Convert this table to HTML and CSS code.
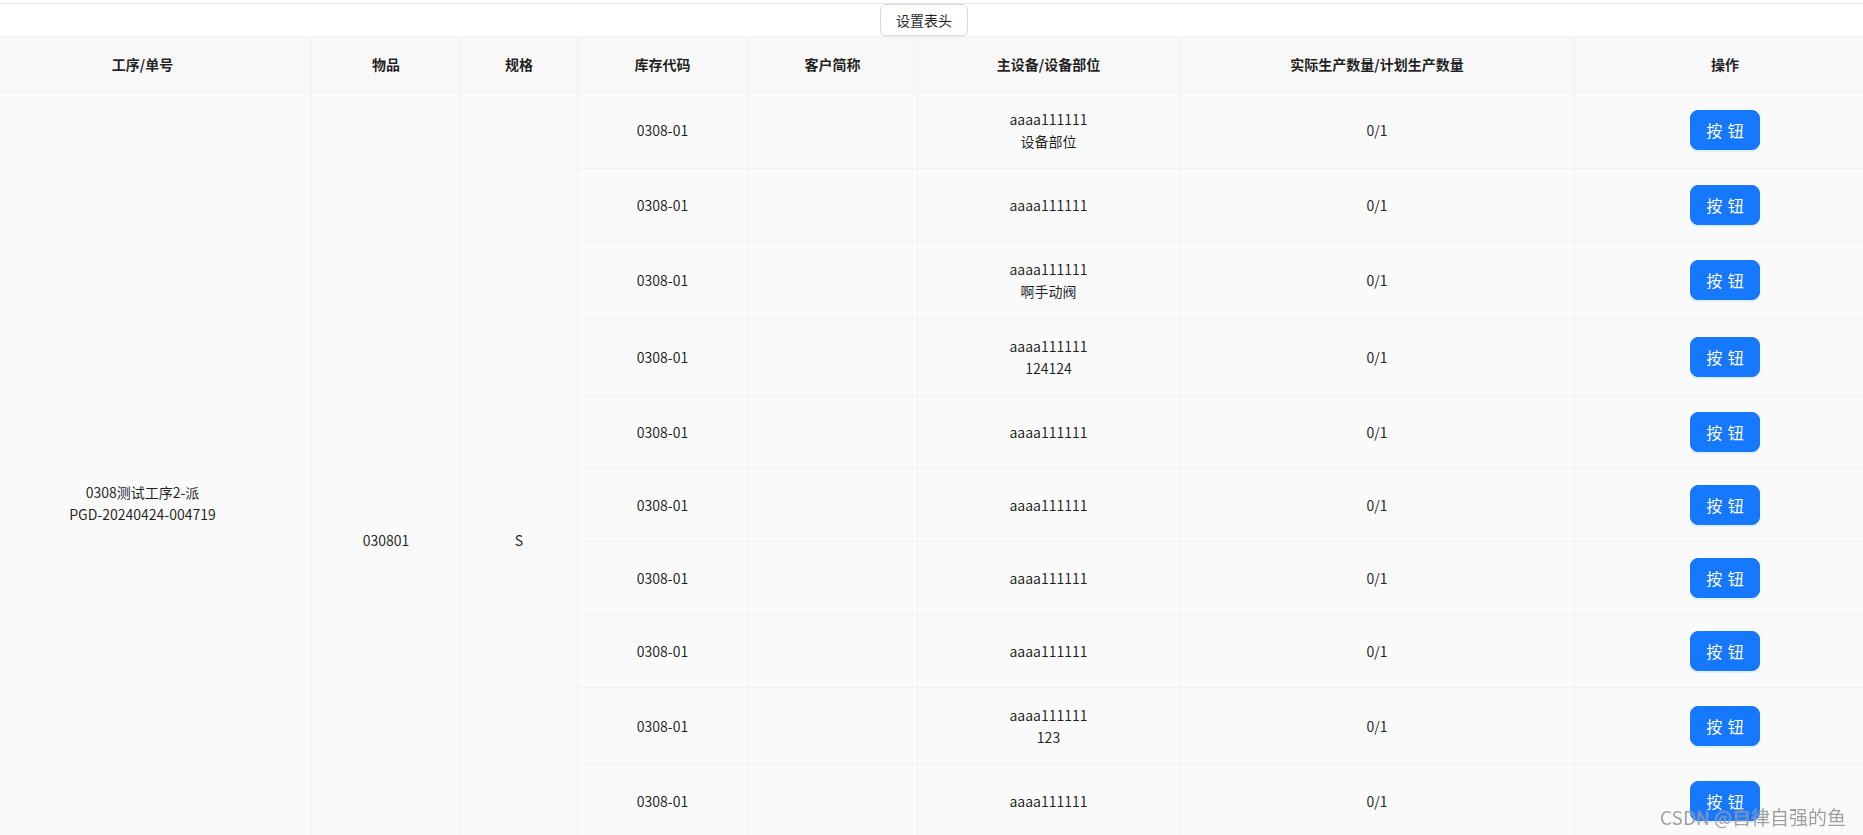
FILE: index.html
```html
<!DOCTYPE html>
<html lang="zh-CN">
<head>
<meta charset="utf-8">
<title>表格</title>
<link rel="stylesheet" href="styles.css">
</head>
<body>
<div class="page">
  <div class="toolbar">
    <button class="btn btn-default" type="button">设置表头</button>
  </div>
  <table class="grid">
    <colgroup>
      <col class="c-proc"><col class="c-item"><col class="c-spec"><col class="c-code"><col class="c-cust"><col class="c-dev"><col class="c-qty"><col class="c-op">
    </colgroup>
    <thead>
      <tr>
        <th>工序/单号</th>
        <th>物品</th>
        <th>规格</th>
        <th>库存代码</th>
        <th>客户简称</th>
        <th>主设备/设备部位</th>
        <th>实际生产数量/计划生产数量</th>
        <th>操作</th>
      </tr>
    </thead>
    <tbody>
      <tr>
        <td rowspan="11"><div>0308测试工序2-派</div><div>PGD-20240424-004719</div></td>
        <td rowspan="12">030801</td>
        <td rowspan="12">S</td>
        <td>0308-01</td><td></td>
        <td><div>aaaa111111</div><div>设备部位</div></td>
        <td>0/1</td>
        <td><button class="btn btn-primary" type="button"><span class="two">按钮</span></button></td>
      </tr>
      <tr>
        <td>0308-01</td><td></td>
        <td><div>aaaa111111</div></td>
        <td>0/1</td>
        <td><button class="btn btn-primary" type="button"><span class="two">按钮</span></button></td>
      </tr>
      <tr>
        <td>0308-01</td><td></td>
        <td><div>aaaa111111</div><div>啊手动阀</div></td>
        <td>0/1</td>
        <td><button class="btn btn-primary" type="button"><span class="two">按钮</span></button></td>
      </tr>
      <tr>
        <td>0308-01</td><td></td>
        <td><div>aaaa111111</div><div>124124</div></td>
        <td>0/1</td>
        <td><button class="btn btn-primary" type="button"><span class="two">按钮</span></button></td>
      </tr>
      <tr>
        <td>0308-01</td><td></td>
        <td><div>aaaa111111</div></td>
        <td>0/1</td>
        <td><button class="btn btn-primary" type="button"><span class="two">按钮</span></button></td>
      </tr>
      <tr>
        <td>0308-01</td><td></td>
        <td><div>aaaa111111</div></td>
        <td>0/1</td>
        <td><button class="btn btn-primary" type="button"><span class="two">按钮</span></button></td>
      </tr>
      <tr>
        <td>0308-01</td><td></td>
        <td><div>aaaa111111</div></td>
        <td>0/1</td>
        <td><button class="btn btn-primary" type="button"><span class="two">按钮</span></button></td>
      </tr>
      <tr>
        <td>0308-01</td><td></td>
        <td><div>aaaa111111</div></td>
        <td>0/1</td>
        <td><button class="btn btn-primary" type="button"><span class="two">按钮</span></button></td>
      </tr>
      <tr>
        <td>0308-01</td><td></td>
        <td><div>aaaa111111</div><div>123</div></td>
        <td>0/1</td>
        <td><button class="btn btn-primary" type="button"><span class="two">按钮</span></button></td>
      </tr>
      <tr>
        <td>0308-01</td><td></td>
        <td><div>aaaa111111</div></td>
        <td>0/1</td>
        <td><button class="btn btn-primary" type="button"><span class="two">按钮</span></button></td>
      </tr>
      <tr>
        <td>0308-01</td><td></td>
        <td><div>aaaa111111</div><div>设备部位</div></td>
        <td>0/1</td>
        <td><button class="btn btn-primary" type="button"><span class="two">按钮</span></button></td>
      </tr>
      <tr>
        <td></td>
        <td>0308-01</td><td></td>
        <td><div>aaaa111111</div></td>
        <td>0/1</td>
        <td><button class="btn btn-primary" type="button"><span class="two">按钮</span></button></td>
      </tr>
    </tbody>
  </table>
</div>
<div class="watermark">CSDN @自律自强的鱼</div>
</body>
</html>
```

FILE: styles.css
```css
html, body {
  margin: 0;
  padding: 0;
  overflow: hidden;
  background: #ffffff;
}

body {
  font-family: "Noto Sans CJK SC", "Noto Sans", sans-serif;
  font-size: 14px;
  line-height: 22px;
  color: rgba(0, 0, 0, 0.88);
}

.page {
  width: 1902px;
  margin-left: -27px;
  padding-top: 3px;
}

.toolbar {
  border-top: 1px solid #e4e4e4;
  display: flex;
  justify-content: center;
  height: 32px;
}

.btn {
  font-family: "Noto Sans CJK SC", "Noto Sans", sans-serif;
  display: inline-flex;
  align-items: center;
  justify-content: center;
  vertical-align: top;
  box-sizing: border-box;
  cursor: pointer;
  margin: 0;
}

.btn-default {
  height: 32px;
  padding: 0 15px;
  font-size: 14px;
  color: rgba(0, 0, 0, 0.88);
  background: #ffffff;
  border: 1px solid #d9d9d9;
  border-radius: 6px;
  box-shadow: 0 2px 0 rgba(0, 0, 0, 0.02);
}

.btn-primary {
  height: 40px;
  padding: 0 15px;
  font-size: 16px;
  color: #ffffff;
  background: #1677ff;
  border: 1px solid #1677ff;
  border-radius: 8px;
  box-shadow: 0 2px 0 rgba(5, 145, 255, 0.1);
}

.btn-primary .two {
  letter-spacing: 0.34em;
  margin-right: -0.34em;
}

.grid {
  border-collapse: collapse;
  table-layout: fixed;
  width: 1902px;
}

.c-proc { width: 338px; }
.c-item { width: 149px; }
.c-spec { width: 117px; }
.c-code { width: 170px; }
.c-cust { width: 170px; }
.c-dev  { width: 262px; }
.c-qty  { width: 395px; }
.c-op   { width: 301px; }

.grid th,
.grid td {
  border: 1px solid #f0f0f0;
  padding: 16px;
  text-align: center;
  vertical-align: middle;
  line-height: 22px;
}

.grid th {
  background: #f8f8f8;
  font-weight: 600;
  color: rgba(0, 0, 0, 0.88);
}

.grid td {
  background: #fafafa;
}

.watermark {
  position: fixed;
  right: 17px;
  bottom: 6px;
  font-family: "Noto Sans CJK SC", "Noto Sans", sans-serif;
  font-size: 19px;
  line-height: 24px;
  color: rgba(0, 0, 0, 0.38);
  text-shadow: 0 0 1px rgba(255, 255, 255, 0.9);
  pointer-events: none;
}
```
